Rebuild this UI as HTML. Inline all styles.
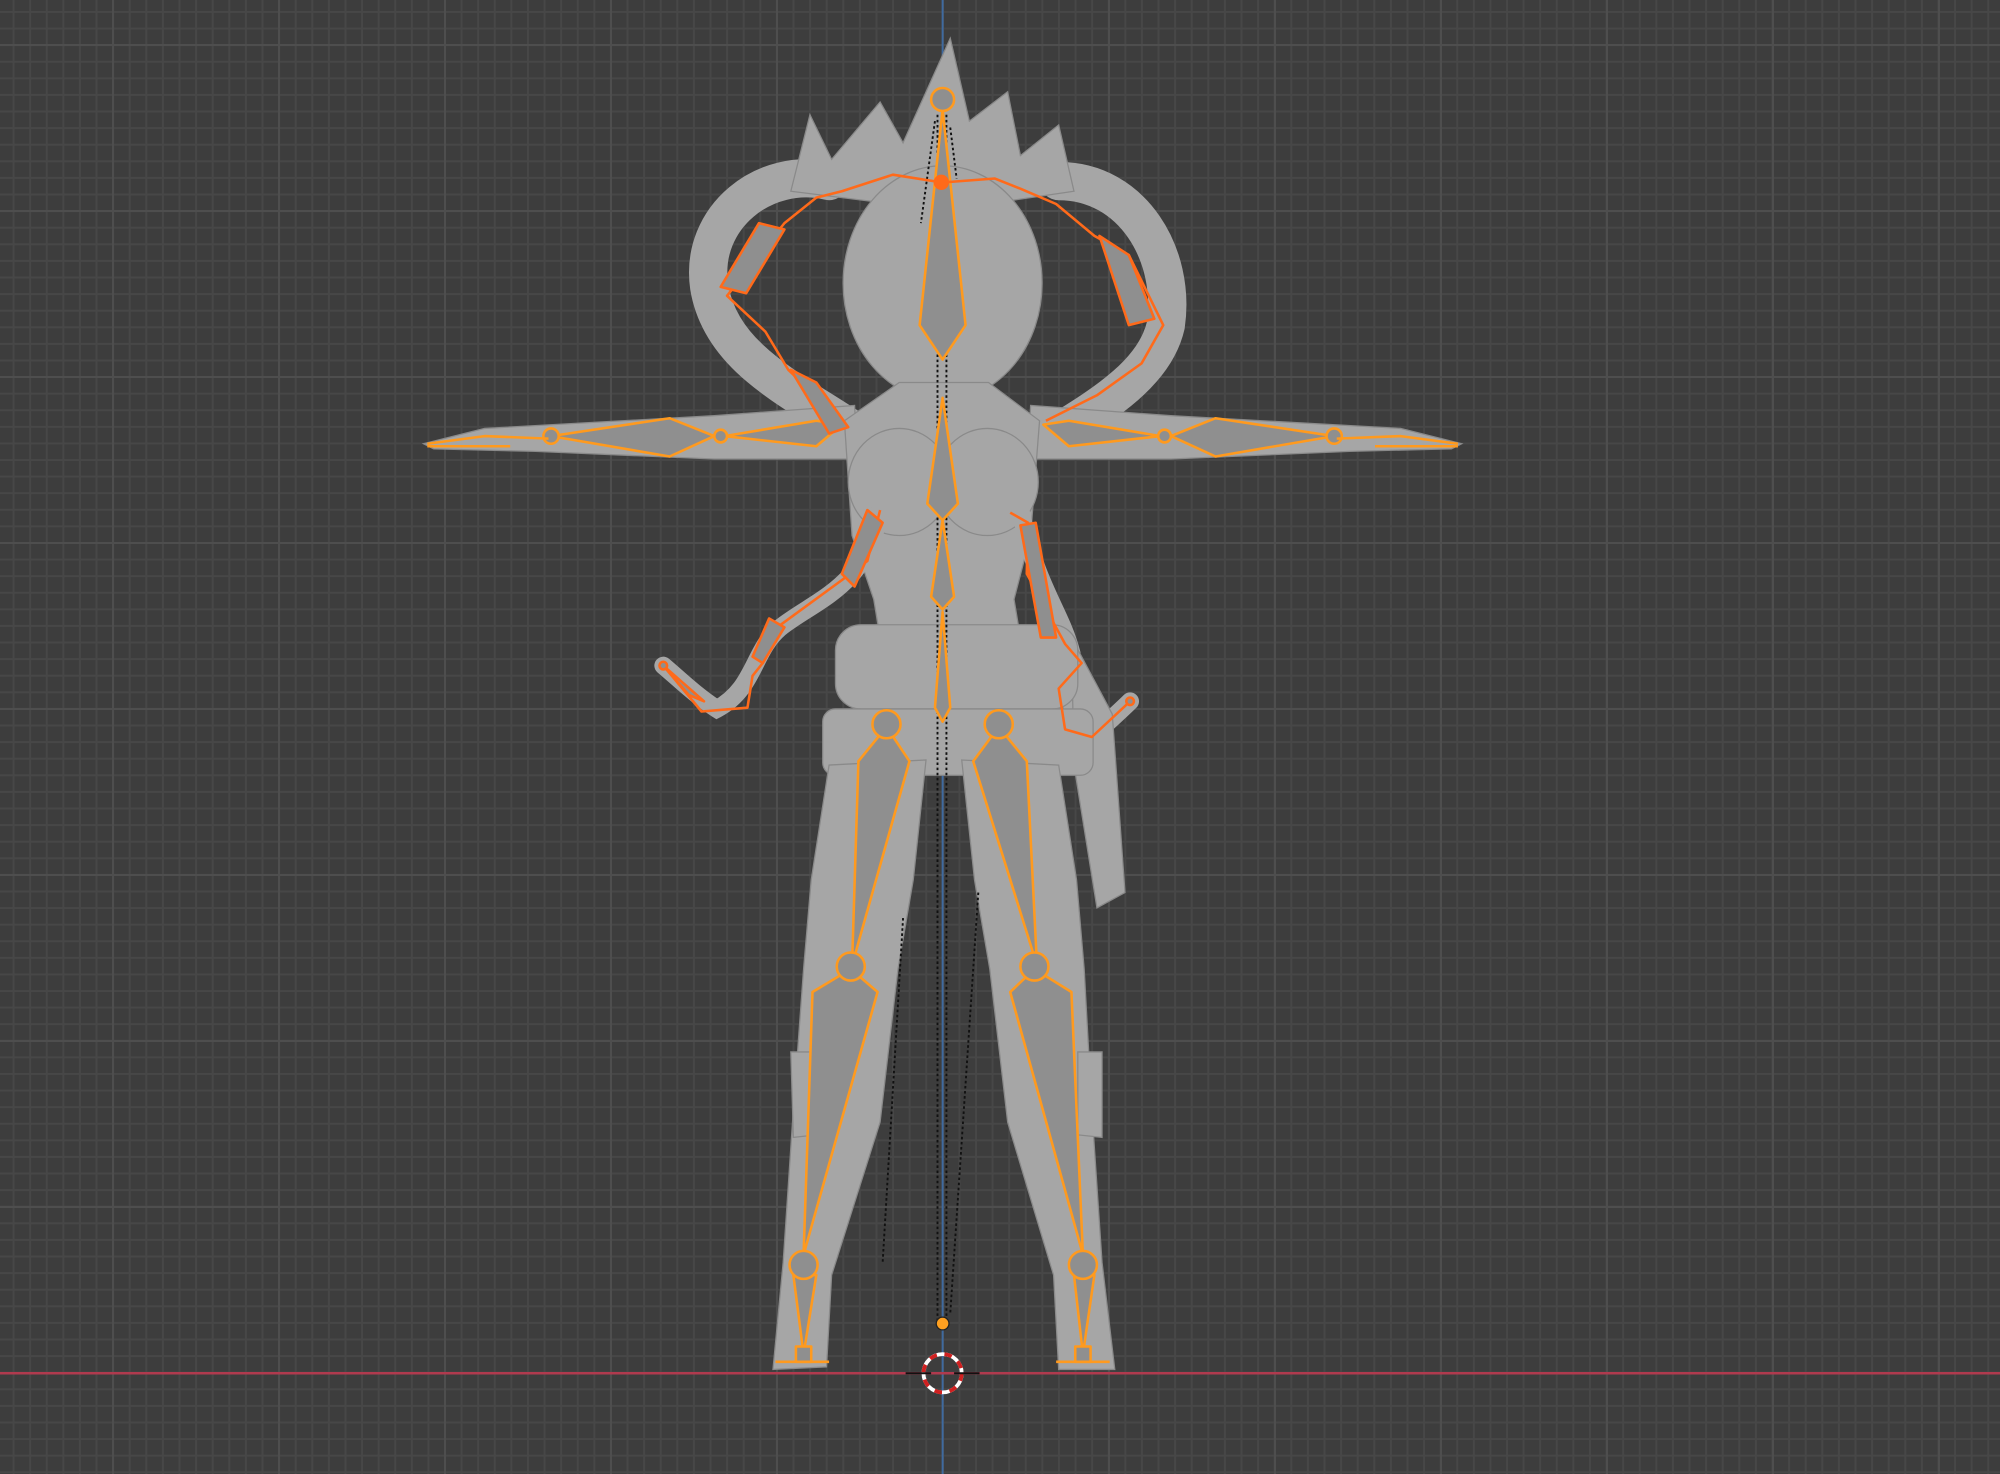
<!DOCTYPE html>
<html><head><meta charset="utf-8"><style>
html,body{margin:0;padding:0;width:2000px;height:1474px;overflow:hidden;background:#3d3d3d}
#g{position:absolute;left:0;top:0;width:2000px;height:1474px;
background-color:#3d3d3d;
background-image:
linear-gradient(to right,#4e4e4e 0,#4e4e4e 2px,transparent 2px),
linear-gradient(to bottom,#4e4e4e 0,#4e4e4e 2px,transparent 2px),
linear-gradient(to right,#474747 0,#474747 2px,transparent 2px),
linear-gradient(to bottom,#474747 0,#474747 2px,transparent 2px);
background-size:166px 166px,166px 166px,16.6px 16.6px,16.6px 16.6px;
background-position:112px 0,0 44px,12.6px 0,0 11px;}
svg{position:absolute;left:0;top:0}
</style></head><body>
<div id="g"></div>
<svg width="2000" height="1474" viewBox="0 0 1568 1156" preserveAspectRatio="none">
<line x1="739" y1="0" x2="739" y2="1156" stroke="#3e6aa0" stroke-width="1.5"/>
<line x1="0" y1="1077" x2="1568" y2="1077" stroke="#b03a4e" stroke-width="2"/>
<g fill="#a6a6a6" stroke="#8a8a8a" stroke-width="1">
<path d="M650,142 C600,130 548,170 556,225 C565,280 620,305 665,335" fill="none" stroke="#a6a6a6" stroke-width="30" stroke-linecap="round"/>
<path d="M830,142 C888,142 922,200 914,255 C905,295 860,320 820,345" fill="none" stroke="#a6a6a6" stroke-width="30" stroke-linecap="round"/>
<polygon points="620,150 635,90 652,125 690,80 708,112 745,30 760,95 790,72 800,122 830,98 842,150 740,165"/>
<ellipse cx="739" cy="222" rx="78" ry="92"/>
<polygon points="332,348 380,336 560,326 670,318 672,360 560,360 420,354 340,352"/>
<polygon points="1146,348 1098,336 918,326 808,318 806,360 918,360 1058,354 1138,352"/>
<polygon points="705,300 775,300 815,330 808,420 795,470 800,500 690,500 685,470 668,420 662,330"/>
<ellipse cx="705" cy="378" rx="40" ry="42"/>
<ellipse cx="774" cy="378" rx="40" ry="42"/>
<path d="M690,400 C680,460 640,470 612,492 C590,510 592,540 562,556 C545,545 532,532 520,522" fill="none" stroke="#a6a6a6" stroke-width="14" stroke-linecap="round"/>
<path d="M800,400 C812,460 832,480 840,512 C835,540 840,570 856,578 C870,565 880,556 886,550" fill="none" stroke="#a6a6a6" stroke-width="14" stroke-linecap="round"/>
<polygon points="840,500 872,560 882,700 860,712 842,600"/>
<rect x="655" y="490" width="190" height="66" rx="20"/>
<rect x="645" y="556" width="212" height="52" rx="10"/>
<polygon points="650,600 726,596 716,690 704,760 690,880 652,1000 648,1072 606,1074 614,990 622,870 630,760 636,690"/>
<polygon points="754,596 830,600 844,690 850,760 856,870 864,990 874,1074 830,1074 826,1000 790,880 776,760 764,690"/>
<polygon points="620,825 640,825 640,890 622,892"/>
<polygon points="845,825 864,825 864,892 845,890"/>
</g>
<g stroke="#111" stroke-width="1.5" stroke-dasharray="2,2" fill="none">
<line x1="735" y1="90" x2="735" y2="1036"/><line x1="742" y1="90" x2="742" y2="1036"/>
<line x1="733" y1="95" x2="722" y2="175"/><line x1="745" y1="100" x2="750" y2="140"/>
<line x1="708" y1="720" x2="692" y2="990"/><line x1="767" y1="700" x2="745" y2="1030"/>
</g>
<g fill="#8f8f8f" stroke="#ff9a1e" stroke-width="2" stroke-linejoin="round">
<polygon points="739,86 757,255 739,282 721,255"/>
<polygon points="739,312 751,395 739,408 727,395"/>
<polygon points="739,408 748,468 739,478 730,468"/>
<polygon points="739,480 745,555 739,566 733,555"/>
<polygon points="432,342 525,328 560,342 525,358"/>
<polygon points="568,342 640,330 660,333 640,350"/>
<polygon points="1046,342 953,328 918,342 953,358"/>
<polygon points="910,342 838,330 818,333 838,350"/>
<polygon points="695,570 713,597 668,757 673,597"/>
<polygon points="783,570 763,597 813,757 805,597"/>
<polygon points="667,760 688,778 630,984 637,778"/>
<polygon points="811,760 792,778 849,984 840,778"/>
<polygon points="622,1000 640,1000 630,1062"/>
<polygon points="842,1000 858,1000 849,1062"/>
<circle cx="739" cy="78" r="9"/>
<circle cx="695" cy="568" r="11"/><circle cx="783" cy="568" r="11"/>
<circle cx="667" cy="758" r="11"/><circle cx="811" cy="758" r="11"/>
<circle cx="630" cy="992" r="11"/><circle cx="849" cy="992" r="11"/>
<circle cx="432" cy="342" r="6"/><circle cx="1046" cy="342" r="6"/>
<circle cx="565" cy="342" r="5"/><circle cx="913" cy="342" r="5"/>
<rect x="624" y="1056" width="12" height="12"/><rect x="843" y="1056" width="12" height="12"/>
<path d="M335,348 L380,342 L430,344 M335,350 L400,350" fill="none"/>
<path d="M1143,348 L1098,342 L1048,344 M1143,350 L1078,350" fill="none"/>
<path d="M608,1068 L650,1068 M828,1068 L870,1068" fill="none"/>
</g>
<g fill="#8f8f8f" stroke="#ff6a1a" stroke-width="2" stroke-linejoin="round">
<polyline points="738,143 700,137 660,150 640,155 615,175 595,200 570,232 600,260 618,290 660,330" fill="none"/>
<polyline points="740,143 780,140 800,148 828,160 858,185 885,200 912,255 895,285 860,310 820,330" fill="none"/>
<polygon points="595,175 615,180 585,230 565,225"/>
<polygon points="862,185 885,200 905,250 885,255"/>
<polygon points="620,290 640,300 665,335 650,340"/>
<polyline points="690,400 680,440 660,455 612,490 598,520 590,530 586,555 550,558 520,522" fill="none"/>
<polyline points="792,402 806,410 805,450 835,505 848,520 830,540 835,572 856,578 886,550" fill="none"/>
<polygon points="680,400 692,410 670,460 660,450"/>
<polygon points="603,485 615,492 598,520 590,515"/>
<polygon points="800,412 812,410 828,500 816,500"/>
<polygon points="552,550 520,522 540,545"/>
<circle cx="738" cy="143" r="5" fill="#ff6a1a"/>
<circle cx="520" cy="522" r="3"/><circle cx="886" cy="550" r="3"/>
</g>
<circle cx="739" cy="1038" r="5" fill="#ffa020" stroke="#222"/>
<circle cx="739" cy="1077" r="15" fill="none" stroke="#fff" stroke-width="3"/>
<circle cx="739" cy="1077" r="15" fill="none" stroke="#d02020" stroke-width="3" stroke-dasharray="6,6"/>
<line x1="710" y1="1077" x2="730" y2="1077" stroke="#111" stroke-width="1.5"/>
<line x1="748" y1="1077" x2="768" y2="1077" stroke="#111" stroke-width="1.5"/>
</svg>
</body></html>
